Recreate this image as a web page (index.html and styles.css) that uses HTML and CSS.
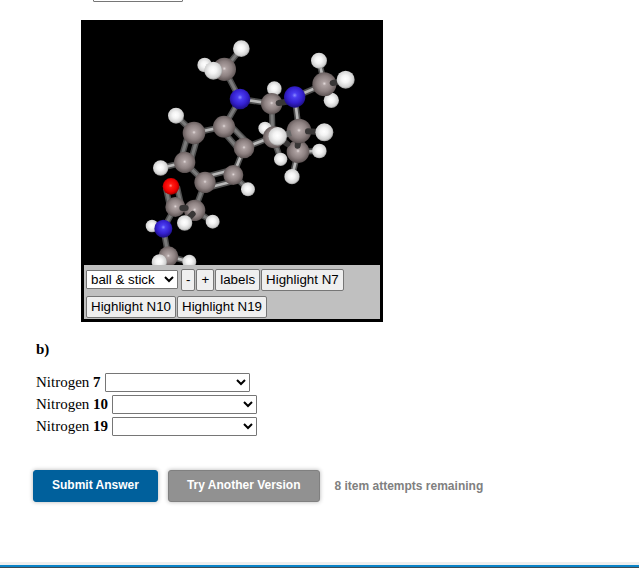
FILE: index.html
```
<!DOCTYPE html>
<html lang="en">
<head>
  <meta charset="UTF-8">
  <title>Nitrogen question</title>
  <link rel="stylesheet" href="styles.css">
</head>
<body>

  <main class="question">
    <select class="previous" aria-label="Part a"><option></option></select>

    <!-- Molecule viewer -->
    <div class="viewer">
      <svg class="molecule" viewBox="12 24 888 726" role="img" aria-label="Ball and stick model">
        <defs>
          <radialGradient id="carbon" cx=".5" cy=".47" r=".58">
            <stop offset="0" stop-color="#e4dcdc"/>
            <stop offset=".14" stop-color="#aea2a2"/>
            <stop offset=".55" stop-color="#8e8282"/>
            <stop offset=".85" stop-color="#655b5b"/>
            <stop offset="1" stop-color="#352f2f"/>
          </radialGradient>
          <radialGradient id="hydrogen" cx=".48" cy=".46" r=".59">
            <stop offset="0" stop-color="#fff"/>
            <stop offset=".35" stop-color="#f4f4f4"/>
            <stop offset=".75" stop-color="#d2d2d2"/>
            <stop offset="1" stop-color="#777"/>
          </radialGradient>
          <radialGradient id="nitrogen" cx=".5" cy=".42" r=".6">
            <stop offset="0" stop-color="#8a8cff"/>
            <stop offset=".2" stop-color="#4a3cf0"/>
            <stop offset=".6" stop-color="#3420cf"/>
            <stop offset="1" stop-color="#1a0d78"/>
          </radialGradient>
          <radialGradient id="oxygen" cx=".48" cy=".46" r=".58">
            <stop offset="0" stop-color="#ff8c8c"/>
            <stop offset=".2" stop-color="#ff1c14"/>
            <stop offset=".65" stop-color="#f00000"/>
            <stop offset="1" stop-color="#880000"/>
          </radialGradient>
        </defs>

        <!-- Bonds behind the atoms -->
        <g class="bond-edge">
          <path d="M484 101L433 163L480 252L432 335L342 354M480 252L575 266M583 221L575 266L578 365L492 399M342 354L288 302M314 442L242 459M314 442L375 502L344 586L398 620M492 399L460 480L504 523M286 576L250 641L265 724L328 740M644 246L733 208L717 137M733 208L754 256M644 246L657 348M555 342L578 365L602 432M654 410L718 408M654 410L636 485"/>
          <path d="M327 350L301 438M355 358L330 446M440 320L505 386M424 343L480 407M370 487L457 464M378 520L466 497M258 520L270 576M291 514L304 572"/>
        </g>
        <g class="bond-light">
          <path d="M484 101L433 163L480 252L432 335M288 302L342 354M314 442L375 502L344 586L398 620M583 221L575 266L578 365M460 480L504 523M286 576L250 641L265 724M555 342L578 365L602 432M733 208L754 256"/>
          <path d="M327 350L301 438M355 358L330 446M440 320L505 386M424 343L480 407M258 520L270 576M291 514L304 572"/>
        </g>
        <g class="bond-shine">
          <path d="M480 252L575 266M432 335L342 354M578 365L492 399M492 399L460 480M314 442L242 459M265 724L328 740M644 246L733 208L717 137M644 246L657 348M654 410L718 408M654 410L636 485"/>
          <path d="M370 487L457 464M378 520L466 497"/>
        </g>

        <!-- Rear atoms first -->
        <g fill="url(#hydrogen)">
          <circle cx="374" cy="150" r="22"/>
          <circle cx="484" cy="101" r="25"/>
          <circle cx="583" cy="221" r="22"/>
          <circle cx="717" cy="137" r="24"/>
          <circle cx="754" cy="256" r="23"/>
          <circle cx="288" cy="302" r="24"/>
          <circle cx="555" cy="340" r="20"/>
          <circle cx="602" cy="433" r="20"/>
          <circle cx="718" cy="408" r="22"/>
          <circle cx="636" cy="485" r="23"/>
          <circle cx="242" cy="459" r="23"/>
          <circle cx="504" cy="523" r="21"/>
          <circle cx="398" cy="620" r="21"/>
          <circle cx="216" cy="633" r="19"/>
        </g>
        <g fill="url(#carbon)">
          <circle cx="433" cy="163" r="35"/>
          <circle cx="575" cy="266" r="32"/>
          <circle cx="733" cy="208" r="36"/>
          <circle cx="342" cy="354" r="34"/>
          <circle cx="432" cy="335" r="33"/>
          <circle cx="582" cy="367" r="33"/>
          <circle cx="492" cy="399" r="31"/>
          <circle cx="314" cy="442" r="32"/>
          <circle cx="460" cy="480" r="30"/>
          <circle cx="375" cy="502" r="32"/>
          <circle cx="286" cy="576" r="30"/>
          <circle cx="344" cy="586" r="32"/>
          <circle cx="265" cy="724" r="30"/>
          <circle cx="654" cy="410" r="34"/>
        </g>

        <!-- Bonds that point to the front -->
        <path class="bond-front" d="M596 264L620 260M758 204L780 200M307 579L317 579M338 597L328 607M653 392L655 374M612 379L622 387"/>
        <circle cx="657" cy="348" r="37" fill="url(#carbon)"/>
        <path class="bond-front" d="M684 349L716 351"/>
        <path class="bond-front-light" d="M633 354L608 361M408 164L424 162"/>

        <g fill="url(#nitrogen)">
          <circle cx="480" cy="252" r="31"/>
          <circle cx="644" cy="246" r="32"/>
          <circle cx="250" cy="641" r="27"/>
        </g>
        <circle cx="273" cy="514" r="25" fill="url(#oxygen)"/>
        <g fill="url(#hydrogen)">
          <circle cx="400" cy="167" r="27"/>
          <circle cx="797" cy="194" r="27"/>
          <circle cx="733" cy="352" r="27"/>
          <circle cx="593" cy="364" r="28"/>
          <circle cx="314" cy="624" r="23"/>
          <circle cx="238" cy="741" r="23"/>
          <circle cx="328" cy="740" r="21"/>
        </g>
      </svg>

      <div class="toolbar">
        <select class="style-select" aria-label="Display style">
          <option>ball &amp; stick</option>
        </select>
        <button type="button" aria-label="Zoom out">-</button>
        <button type="button" aria-label="Zoom in">+</button>
        <button type="button">labels</button>
        <button type="button">Highlight N7</button>
        <button type="button">Highlight N10</button>
        <button type="button">Highlight N19</button>
      </div>
    </div>

    <h2 class="part">b)</h2>

    <div class="answer">
      <label for="n7">Nitrogen <b>7</b></label>
      <select id="n7"><option></option></select>
    </div>
    <div class="answer">
      <label for="n10">Nitrogen <b>10</b></label>
      <select id="n10"><option></option></select>
    </div>
    <div class="answer">
      <label for="n19">Nitrogen <b>19</b></label>
      <select id="n19"><option></option></select>
    </div>

    <div class="actions">
      <button type="submit" class="btn submit">Submit Answer</button>
      <button type="button" class="btn retry">Try Another Version</button>
      <span class="attempts">8 item attempts remaining</span>
    </div>
  </main>

  <footer class="footer"></footer>

</body>
</html>
```
FILE: styles.css
```
body {
  margin: 0;
  background-color: #fff;
  color: #000;
  font-family: "Liberation Serif", "Times New Roman", serif;
  font-size: 15px;
}

.question {
  display: flow-root;
  padding: 0 36px;
}

select {
  box-sizing: border-box;
  height: 19px;
  margin: 0;
  background-color: #fff;
  border: 1px solid #767676;
  border-radius: 1px;
  color: #000;
  font-family: "Liberation Sans", Arial, sans-serif;
}

.previous {
  display: block;
  width: 90px;
  margin: -17px 0 18px 57px;
}

/* viewer */
.viewer {
  box-sizing: border-box;
  max-width: 302px;
  margin-left: 45px;
  background-color: #000;
  border: 3px solid #000;
}

.molecule {
  display: block;
  width: 100%;
}

.bond-edge,
.bond-light,
.bond-shine,
.bond-front,
.bond-front-light {
  fill: none;
  stroke: #505050;
  stroke-width: 18;
}

.bond-light {
  stroke: #7a7a7a;
  stroke-width: 9;
}

.bond-shine {
  stroke: #b8b8b8;
  stroke-width: 8;
}

.bond-front {
  stroke: #383636;
  stroke-width: 18;
  stroke-linecap: round;
}

.bond-front-light {
  stroke: #666;
  stroke-width: 18;
}

.toolbar {
  display: flex;
  flex-wrap: wrap;
  gap: 5px 1px;
  padding: 4px 2px 1px;
  background-color: #c0c0c0;
}

.toolbar button {
  box-sizing: border-box;
  height: 22px;
  padding: 0 4px 2px;
  background-color: #efefef;
  border: 1px solid #767676;
  border-radius: 2px;
  color: #000;
  font-family: "Liberation Sans", Arial, sans-serif;
}

.style-select {
  width: 92px;
  margin: 1px 2px 0 0;
}

/* answers */
.part {
  margin: 18px 0 13px;
  font-size: 15px;
  line-height: 18px;
}

.answer {
  display: flex;
  align-items: center;
  gap: 4px;
  height: 22px;
}

.answer select {
  width: 145px;
}

.actions {
  display: flex;
  align-items: center;
  gap: 10px;
  margin: 33px 0 60px -3px;
  font-family: "Liberation Sans", Arial, sans-serif;
  font-size: 12px;
  font-weight: bold;
}

.btn {
  height: 32px;
  padding: 0 18px 2px;
  border: 1px solid #00609c;
  border-radius: 3px;
  background-color: #00609c;
  box-shadow: 0 0 4px rgba(0, 0, 0, 0.3);
  color: #fff;
  font: inherit;
}

.retry {
  background-color: #919191;
  border-color: #808080;
}

.attempts {
  margin-left: 5px;
  color: #808080;
}

.footer {
  height: 2px;
  background-color: #0a84c8;
  border-top: 3px solid #eee;
  border-bottom: 1px solid #3c4a54;
}
```
